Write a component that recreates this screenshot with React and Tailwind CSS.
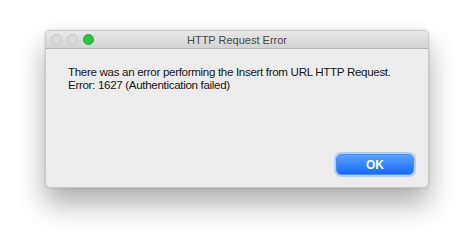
export default function App() {
  return (
    <div className="w-[474px] h-[248px] bg-white pt-[30px] pl-[45px]" style={{ fontFamily: '"Liberation Sans", Arial, sans-serif' }}>
      <div className="w-[384px] h-[158px] rounded-[5px] bg-[#ececec] border border-[#c9c9c9] shadow-[0_16px_28px_rgba(0,0,0,0.32),0_0_3px_rgba(0,0,0,0.15)] flex flex-col overflow-hidden">
        <div className="relative h-[18px] bg-gradient-to-b from-[#e8e8e8] to-[#d3d3d3] border-b border-[#b5b5b5] flex items-center justify-center">
          <div className="absolute left-[5px] top-[3px] flex gap-[5px]">
            <span className="w-[11px] h-[11px] rounded-full bg-[#dcdcdc] border border-[#c4c4c4]"></span>
            <span className="w-[11px] h-[11px] rounded-full bg-[#dcdcdc] border border-[#c4c4c4]"></span>
            <span className="w-[11px] h-[11px] rounded-full bg-[#2bc33f] border border-[#22a533]"></span>
          </div>
          <span className="text-[11px] text-[#4a4a4a] leading-none pt-px">HTTP Request Error</span>
        </div>
        <div className="flex-1 flex flex-col pl-[22px] pr-[14px] pt-[16px] pb-[12px]">
          <p className="text-[11.6px] leading-[13px] tracking-[-0.33px] text-[#161616] whitespace-nowrap">
            There was an error performing the Insert from URL HTTP Request.
            <br />
            Error: 1627 (Authentication failed)
          </p>
          <div className="mt-auto flex justify-end">
            <button className="w-[78px] h-[21px] rounded-[5px] bg-gradient-to-b from-[#5aa2ff] to-[#1668f5] border border-[#4a8ef0] shadow-[0_0_0_2px_rgba(120,170,250,0.45)] text-white text-[12px] font-bold leading-none">
              OK
            </button>
          </div>
        </div>
      </div>
    </div>
  )
}
